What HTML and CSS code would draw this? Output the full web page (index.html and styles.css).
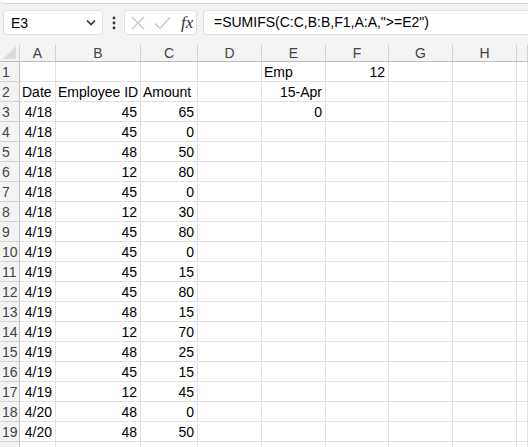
FILE: index.html
```html
<!DOCTYPE html>
<html lang="en">

<head>
    <meta charset="UTF-8">
    <meta name="viewport" content="width=device-width, initial-scale=1.0">
    <title>Sheet</title>
    <link rel="stylesheet" href="styles.css">
</head>

<body>
    <div class="ribbon"></div>
    <div class="fbar">
        <div class="namebox">
            <span>E3</span>
            <svg width="10" height="7" viewBox="0 0 10 7"><path d="M1 1.5 L5 5.5 L9 1.5" fill="none" stroke="#333" stroke-width="1.6"/></svg>
        </div>
        <div class="dots">
            <svg width="4" height="14" viewBox="0 0 4 14"><circle cx="2" cy="2" r="1.4" fill="#333"/><circle cx="2" cy="7" r="1.4" fill="#333"/><circle cx="2" cy="12" r="1.4" fill="#333"/></svg>
        </div>
        <div class="fxbox">
            <svg width="14" height="14" viewBox="0 0 14 14"><path d="M1 1 L13 13 M13 1 L1 13" stroke="#c4c4c4" stroke-width="1.2" fill="none"/></svg>
            <svg width="17" height="14" viewBox="0 0 17 14"><path d="M1 7.5 L6 12.5 L16 1.5" stroke="#c4c4c4" stroke-width="1.2" fill="none"/></svg>
            <span class="fx">fx</span>
        </div>
        <div class="formula">=SUMIFS(C:C,B:B,F1,A:A,"&gt;=E2")</div>
    </div>

    <div class="sheet" id="sheet">
        <div class="corner"><span class="tri"></span></div>
        <div class="colh">A</div>
        <div class="colh">B</div>
        <div class="colh">C</div>
        <div class="colh">D</div>
        <div class="colh">E</div>
        <div class="colh">F</div>
        <div class="colh">G</div>
        <div class="colh">H</div>
        <div class="colh"></div>
    </div>

    <script src="script.js"></script>
</body>

</html>
```

FILE: script.js
```js
const sheet = document.getElementById('sheet');

// row: [A, B, C, D, E, F] ; numbers go right, text goes left
const rows = [
    ['', '', '', '', 'Emp', '12'],
    ['Date', 'Employee ID', 'Amount', '', '15-Apr', ''],
    ['4/18', '45', '65', '', '0', ''],
    ['4/18', '45', '0'],
    ['4/18', '48', '50'],
    ['4/18', '12', '80'],
    ['4/18', '45', '0'],
    ['4/18', '12', '30'],
    ['4/19', '45', '80'],
    ['4/19', '45', '0'],
    ['4/19', '45', '15'],
    ['4/19', '45', '80'],
    ['4/19', '48', '15'],
    ['4/19', '12', '70'],
    ['4/19', '48', '25'],
    ['4/19', '45', '15'],
    ['4/19', '12', '45'],
    ['4/20', '48', '0'],
    ['4/20', '48', '50']
];

const leftText = ['Date', 'Employee ID', 'Amount', 'Emp'];

rows.forEach((row, i) => {
    const head = document.createElement('div');
    head.className = 'rowh';
    head.textContent = i + 1;
    sheet.appendChild(head);

    for (let c = 0; c < 9; c++) {
        const cell = document.createElement('div');
        const val = row[c] || '';
        cell.className = 'cell' + (leftText.includes(val) ? ' txt' : '');
        cell.textContent = val;
        sheet.appendChild(cell);
    }
});

// the next row only peeks in at the bottom edge
const tail = document.createElement('div');
tail.className = 'rowh';
sheet.appendChild(tail);
for (let c = 0; c < 9; c++) {
    const cell = document.createElement('div');
    cell.className = 'cell';
    sheet.appendChild(cell);
}
```

FILE: styles.css
```css
html, body {
    height: 100%;
    overflow: hidden;
}

body {
    margin: 0;
    background-color: #f3f3f3;
    font-family: 'Liberation Sans', Arial, sans-serif;
    color: #000;
}

.ribbon {
    height: 3px;
    background-color: #fff;
    border-bottom: 1px solid #d6d6d6;
    border-bottom-left-radius: 6px;
    margin-bottom: 6px;
}

.fbar {
    display: flex;
    height: 25px;
    padding-left: 3px;
    margin-bottom: 10px;
}

.namebox {
    box-sizing: border-box;
    width: 100px;
    display: flex;
    align-items: center;
    justify-content: space-between;
    padding: 0 6px 0 7px;
    background-color: #fff;
    border: 1px solid #e0e0e0;
    border-radius: 4px;
    font-size: 14px;
}

.dots {
    width: 21px;
    display: flex;
    align-items: center;
    justify-content: center;
}

.fxbox {
    box-sizing: border-box;
    width: 73px;
    display: flex;
    align-items: center;
    gap: 9px;
    padding-left: 6px;
    background-color: #fff;
    border: 1px solid #e0e0e0;
    border-radius: 4px;
}

.fx {
    font-family: 'Liberation Serif', serif;
    font-style: italic;
    font-size: 17px;
    color: #333;
    margin-left: 1px;
}

.formula {
    flex: 1;
    margin-left: 6px;
    padding-left: 10px;
    line-height: 23px;
    font-size: 14px;
    background-color: #fff;
    border: 1px solid #e0e0e0;
    border-right: none;
    border-radius: 4px 0 0 4px;
    white-space: nowrap;
}

.sheet {
    display: grid;
    grid-template-columns: 20px 36px 85px 57px 64px 64px 63px 64px 64px 11px;
    grid-template-rows: 17px;
    grid-auto-rows: 20px;
    background-color: #fff;
}

.corner {
    background-color: #f3f3f3;
    border-right: 1px solid #d2d2d2;
    border-bottom: 1px solid #bdbdbd;
    position: relative;
}

.tri {
    position: absolute;
    right: 3px;
    bottom: 2px;
    width: 0;
    height: 0;
    border-left: 13px solid transparent;
    border-bottom: 13px solid #dcdcdc;
}

.colh {
    background-color: #f3f3f3;
    border-right: 1px solid #d2d2d2;
    border-bottom: 1px solid #bdbdbd;
    color: #444;
    font-size: 14px;
    text-align: center;
    line-height: 17px;
}

.rowh {
    background-color: #f3f3f3;
    border-right: 1px solid #bdbdbd;
    border-bottom: 1px solid #d2d2d2;
    color: #444;
    font-size: 14px;
    padding-left: 2px;
    line-height: 20px;
}

.cell {
    border-right: 1px solid #e1e1e1;
    border-bottom: 1px solid #e1e1e1;
    font-size: 14px;
    line-height: 20px;
    text-align: right;
    padding: 0 3px;
    white-space: nowrap;
    overflow: hidden;
}

.cell.txt {
    text-align: left;
    padding-left: 2px;
}
```
